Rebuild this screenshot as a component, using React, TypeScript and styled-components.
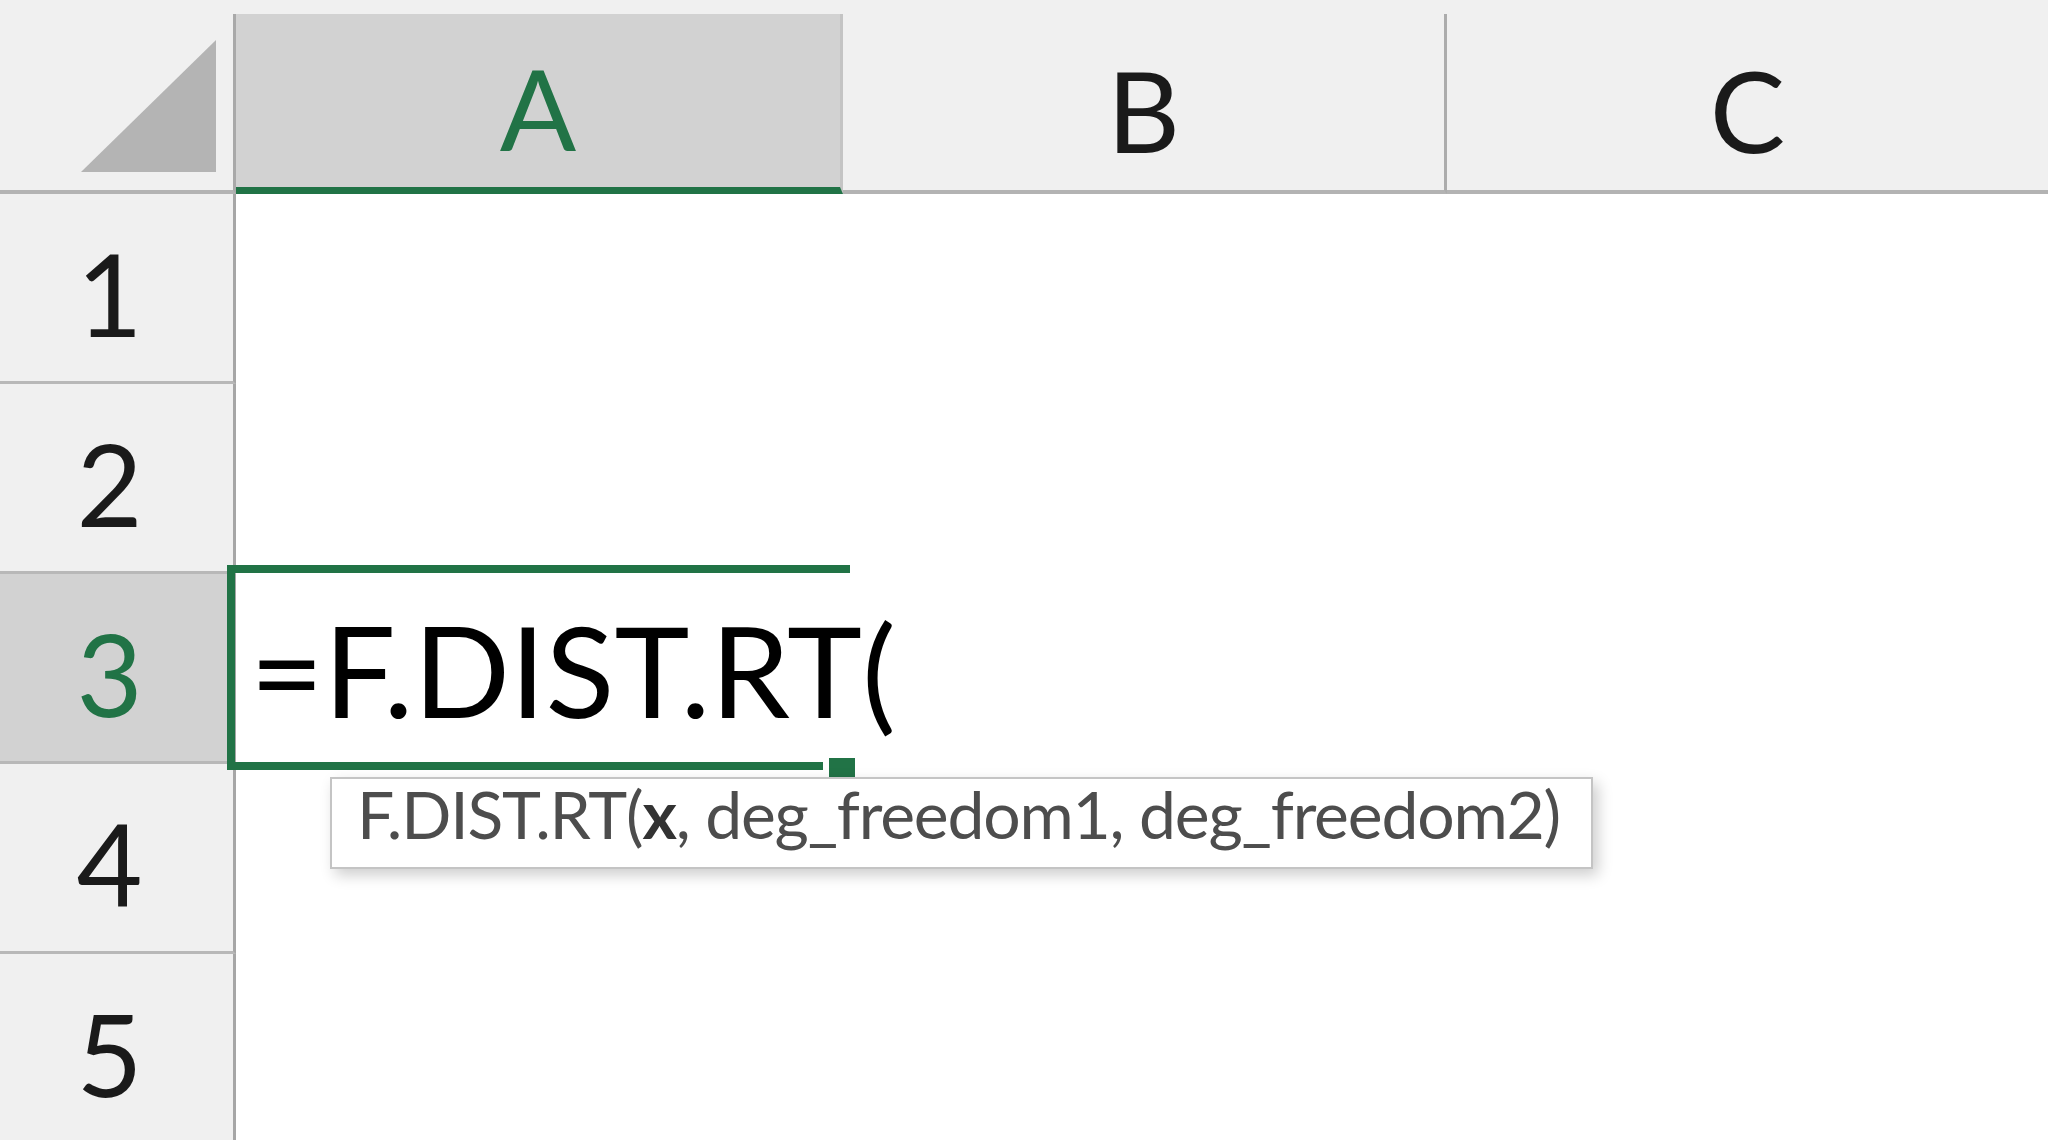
import React from "react";
import styled, { createGlobalStyle } from "styled-components";

const GREEN = "#217346";

const GlobalStyle = createGlobalStyle`
  html, body {
    margin: 0;
    padding: 0;
    background: #ffffff;
    overflow: hidden;
  }
  body {
    font-family: Lato, "Liberation Sans", sans-serif;
  }
`;

const Sheet = styled.div`
  position: relative;
  width: 2048px;
  height: 1140px;
  overflow: hidden;
  background: #ffffff;
`;

const TopStrip = styled.div`
  height: 14px;
  background: #f0f0f0;
`;

const Grid = styled.div`
  display: grid;
  grid-template-columns: 236px 607px 604px 604px;
`;

const Corner = styled.div`
  box-sizing: border-box;
  height: 180px;
  background: #f0f0f0;
  border-right: 3px solid #a9a9a9;
  border-bottom: 4px solid #b3b3b3;
  display: flex;
  justify-content: flex-end;
  align-items: flex-end;
  padding: 0 17px 18px 0;
`;

const ColumnHeader = styled.div<{ $selected?: boolean }>`
  box-sizing: border-box;
  height: 180px;
  display: flex;
  justify-content: center;
  align-items: center;
  padding-top: 14px;
  font-size: 113px;
  line-height: 1;
  color: ${(p) => (p.$selected ? GREEN : "#1a1a1a")};
  background: ${(p) => (p.$selected ? "#d2d2d2" : "#f0f0f0")};
  border-right: 3px solid ${(p) => (p.$selected ? "#c4c4c4" : "#acacac")};
  border-bottom: ${(p) => (p.$selected ? `7px solid ${GREEN}` : "4px solid #b3b3b3")};
`;

const RowHeader = styled.div<{ $selected?: boolean }>`
  box-sizing: border-box;
  height: 190px;
  display: flex;
  justify-content: center;
  align-items: center;
  padding: 10px 14px 0 0;
  font-size: 114px;
  line-height: 1;
  color: ${(p) => (p.$selected ? GREEN : "#1a1a1a")};
  background: ${(p) => (p.$selected ? "#d2d2d2" : "#f0f0f0")};
  border-right: 3px solid #a6a6a6;
  border-bottom: 3px solid #b8b8b8;
`;

const Cell = styled.div`
  box-sizing: border-box;
  height: 190px;
  background: #ffffff;
  display: flex;
  align-items: center;
  overflow: visible;
  white-space: nowrap;
`;

const CellText = styled.span`
  position: relative;
  z-index: 1;
  font-size: 127px;
  line-height: 1;
  color: #000000;
  padding-left: 14px;
`;

const SelectionFrame = styled.div`
  position: absolute;
  left: 227px;
  top: 565px;
  width: 623px;
  height: 205px;
  box-sizing: border-box;
  border-top: 8px solid ${GREEN};
  border-left: 8px solid ${GREEN};
  z-index: 2;
`;

const SelectionBottom = styled.div`
  position: absolute;
  left: 227px;
  top: 762px;
  width: 596px;
  height: 8px;
  background: ${GREEN};
  z-index: 2;
`;

const FillHandle = styled.div`
  position: absolute;
  left: 829px;
  top: 758px;
  width: 26px;
  height: 19px;
  background: ${GREEN};
  z-index: 2;
`;

const Tooltip = styled.div`
  position: absolute;
  left: 330px;
  top: 777px;
  width: 1263px;
  height: 92px;
  box-sizing: border-box;
  background: #ffffff;
  border: 2px solid #c4c4c4;
  box-shadow: 5px 6px 14px rgba(0, 0, 0, 0.2);
  padding: 2px 0 0 25px;
  display: flex;
  align-items: flex-start;
  white-space: nowrap;
  font-size: 66px;
  line-height: 1;
  letter-spacing: -1.2px;
  color: #4d4d4d;
  z-index: 3;
`;

const CurrentArg = styled.b`
  font-weight: 700;
  color: #333333;
`;

const columns = ["A", "B", "C"];
const rows = [1, 2, 3, 4, 5];
const activeRow = 3;

export default function App() {
  return (
    <Sheet>
      <GlobalStyle />
      <TopStrip />
      <Grid>
        <Corner>
          <svg width="135" height="132" viewBox="0 0 135 132">
            <polygon points="0,132 135,132 135,0" fill="#b4b4b4" />
          </svg>
        </Corner>
        {columns.map((c) => (
          <ColumnHeader key={c} $selected={c === "A"}>
            {c}
          </ColumnHeader>
        ))}
        {rows.map((r) => (
          <React.Fragment key={r}>
            <RowHeader $selected={r === activeRow}>{r}</RowHeader>
            <Cell>{r === activeRow && <CellText>=F.DIST.RT(</CellText>}</Cell>
            <Cell />
            <Cell />
          </React.Fragment>
        ))}
      </Grid>
      <SelectionFrame />
      <SelectionBottom />
      <FillHandle />
      <Tooltip>
        F.DIST.RT(<CurrentArg>x</CurrentArg>, deg_freedom1, deg_freedom2)
      </Tooltip>
    </Sheet>
  );
}
